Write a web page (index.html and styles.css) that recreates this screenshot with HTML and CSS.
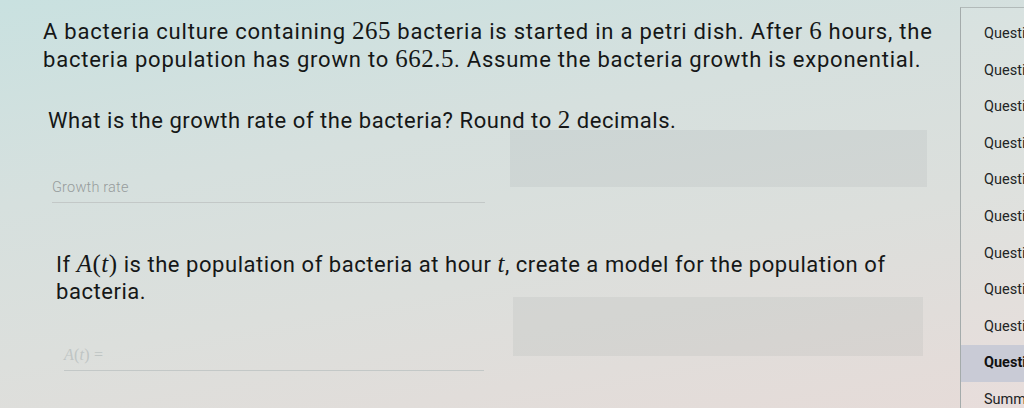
FILE: index.html
```html
<!DOCTYPE html>
<html>
<head>
<meta charset="utf-8">
<link rel="stylesheet" href="styles.css">
</head>
<body>
<div class="page">
  <main class="main">
    <p class="para intro">A bacteria culture containing <span class="m">265</span> bacteria is started in a petri dish. After <span class="m">6</span> hours, the bacteria population has grown to <span class="m">662.5</span>. Assume the bacteria growth is exponential.</p>
    <p class="para q1">What is the growth rate of the bacteria? Round to <span class="m">2</span> decimals.</p>
    <div class="answer-row row1">
      <div class="input"><span class="ph">Growth rate</span></div>
      <div class="feedback"></div>
    </div>
    <p class="para q2">If <span class="m i">A</span><span class="m">(</span><span class="m i">t</span><span class="m">)</span> is the population of bacteria at hour <span class="m i">t</span>, create a model for the population of bacteria.</p>
    <div class="answer-row row2">
      <div class="input input2"><span class="ph math-ph"><i>A</i>(<i>t</i>) =</span></div>
      <div class="feedback fb2"></div>
    </div>
  </main>
  <nav class="sidebar">
    <div class="item">Question 1</div>
    <div class="item">Question 2</div>
    <div class="item">Question 3</div>
    <div class="item">Question 4</div>
    <div class="item">Question 5</div>
    <div class="item">Question 6</div>
    <div class="item">Question 7</div>
    <div class="item">Question 8</div>
    <div class="item">Question 9</div>
    <div class="item active">Question 10</div>
    <div class="item">Summary</div>
  </nav>
</div>
</body>
</html>
```
FILE: styles.css
```css
html, body {
  margin: 0;
  padding: 0;
}
body {
  width: 1024px;
  height: 408px;
  overflow: hidden;
  font-family: Roboto, "Liberation Sans", sans-serif;
  color: #151717;
  background: linear-gradient(170deg, #c9e1e0 0%, #d6e0de 35%, #dcdfdc 62%, #e6dbd8 100%);
}
.page {
  display: flex;
  height: 408px;
}
.main {
  width: 917px;
  flex: none;
  padding: 17px 0 0 43px;
}
.para {
  margin: 0;
  font-size: 22px;
  line-height: 27px;
  letter-spacing: 0.55px;
  width: 900px;
}
.intro {
  letter-spacing: 0.78px;
}
.m {
  font-family: "Liberation Serif", "DejaVu Serif", serif;
  font-size: 25px;
  letter-spacing: 0.5px;
}
.i {
  font-style: italic;
}
.q1 {
  margin-top: 33px;
  padding-left: 5px;
}
.answer-row {
  display: flex;
  align-items: flex-start;
}
.row1 {
  margin-top: -4px;
  gap: 25px;
}
.input {
  margin-left: 9px;
  width: 433px;
  height: 28px;
  margin-top: 45px;
  border-bottom: 1px solid #c3c8c7;
  display: flex;
  align-items: flex-end;
  padding-bottom: 6px;
  box-sizing: border-box;
}
.ph {
  font-size: 14.5px;
  font-weight: 300;
  color: #969c9c;
  letter-spacing: 0.2px;
}
.feedback {
  width: 417px;
  height: 57px;
  background: rgba(110, 125, 122, 0.09);
}
.q2 {
  margin-top: 47px;
  padding-left: 13px;
  width: 887px;
}
.row2 {
  margin-top: -8px;
  gap: 29px;
}
.input2 {
  margin-top: 46px;
  margin-left: 21px;
  width: 420px;
}
.math-ph {
  font-family: "Liberation Serif", "DejaVu Serif", serif;
  font-size: 16px;
  font-weight: 400;
  color: #bfc5c4;
}
.fb2 {
  width: 410px;
  height: 59px;
}
.sidebar {
  flex: 1;
  margin-top: 7px;
  padding-top: 8px;
  border-top: 1px solid #b2bab9;
  border-left: 1px solid #a4abab;
  overflow: hidden;
  background: rgba(255, 255, 255, 0.08);
}
.item {
  height: 36.6px;
  line-height: 36.6px;
  padding-left: 23px;
  font-size: 14.5px;
  color: #222425;
  white-space: nowrap;
}
.item.active {
  background: #c9cbd6;
  font-weight: 700;
  color: #111;
}
```
